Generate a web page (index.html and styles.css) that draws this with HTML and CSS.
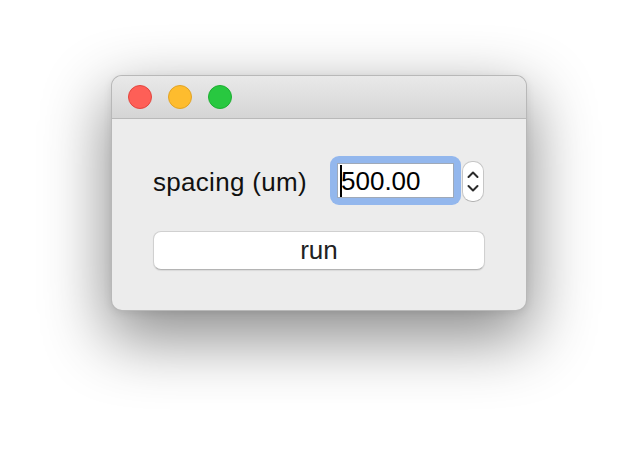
FILE: index.html
```html
<!DOCTYPE html>
<html>
<head>
<meta charset="utf-8">
<link rel="stylesheet" href="styles.css">
</head>
<body>
<div class="stage">
  <div class="window">
    <div class="titlebar">
      <span class="light red"></span>
      <span class="light yellow"></span>
      <span class="light green"></span>
    </div>
    <div class="content">
      <div class="row">
        <span class="label">spacing (um)</span>
        <div class="spin">
          <div class="ring">
            <div class="field"><span class="caret"></span><span class="value">500.00</span></div>
          </div>
          <div class="stepper">
            <svg width="22" height="41" viewBox="0 0 22 41">
              <path d="M6.5 16 L11 11.5 L15.5 16" fill="none" stroke="#2a2a2a" stroke-width="2" stroke-linecap="round" stroke-linejoin="round"/>
              <path d="M6.5 25 L11 29.5 L15.5 25" fill="none" stroke="#2a2a2a" stroke-width="2" stroke-linecap="round" stroke-linejoin="round"/>
            </svg>
          </div>
        </div>
      </div>
      <div class="button">run</div>
    </div>
  </div>
</div>
</body>
</html>
```

FILE: styles.css
```css
html, body {
  margin: 0;
  padding: 0;
  background: #ffffff;
}
body {
  width: 638px;
  height: 458px;
  overflow: hidden;
  font-family: "Liberation Sans", Arial, sans-serif;
}
.stage {
  padding: 75px 0 0 111px;
}
.window {
  box-sizing: border-box;
  width: 416px;
  height: 236px;
  border: 1px solid rgba(0, 0, 0, 0.22);
  border-radius: 11px;
  background: #ececec;
  overflow: hidden;
  box-shadow: 0 24px 64px 4px rgba(0, 0, 0, 0.45), 0 2px 8px rgba(0, 0, 0, 0.08);
}
.titlebar {
  height: 42px;
  border-bottom: 1px solid #b9b9b9;
  background: linear-gradient(#e9e9e9, #d5d5d5);
  display: flex;
  align-items: center;
  padding-left: 16px;
  gap: 16px;
}
.light {
  box-sizing: border-box;
  width: 24px;
  height: 24px;
  border-radius: 50%;
}
.red { background: #fe5f57; border: 1px solid #e2463f; }
.yellow { background: #febc2e; border: 1px solid #e1a325; }
.green { background: #28c840; border: 1px solid #1eae32; }
.content {
  padding: 37px 41px 0 41px;
}
.row {
  display: flex;
  align-items: center;
  justify-content: space-between;
  height: 49px;
}
.label {
  font-size: 26px;
  color: #111;
  margin-top: 3px;
  letter-spacing: 0.3px;
}
.spin {
  display: flex;
  align-items: center;
  gap: 1px;
  margin-right: 1px;
}
.ring {
  padding: 7px;
  border-radius: 9px;
  background: #93b7ed;
}
.field {
  box-sizing: border-box;
  width: 117px;
  height: 35px;
  background: #fff;
  border: 1px solid #9fa9b8;
  display: flex;
  align-items: center;
  padding-left: 2px;
  font-size: 26px;
  color: #000;
}
.caret {
  display: inline-block;
  width: 2px;
  height: 32px;
  background: #000;
  margin-right: -1px;
}
.value {
  padding-top: 2px;
}
.stepper {
  box-sizing: border-box;
  width: 22px;
  height: 41px;
  background: #fff;
  border: 1px solid #c6c6c6;
  border-bottom-color: #b3b3b3;
  border-radius: 10px;
  display: flex;
  align-items: center;
  justify-content: center;
  margin-top: 1px;
}
.stepper svg {
  display: block;
  margin: -1px;
}
.button {
  box-sizing: border-box;
  margin-top: 26px;
  height: 39px;
  background: #fff;
  border: 1px solid #d0d0d0;
  border-bottom-color: #b4b4b4;
  border-radius: 8px;
  box-shadow: 0 1px 1px rgba(0, 0, 0, 0.08);
  display: flex;
  align-items: center;
  justify-content: center;
  font-size: 26px;
  color: #222;
  padding-bottom: 1px;
}
```
